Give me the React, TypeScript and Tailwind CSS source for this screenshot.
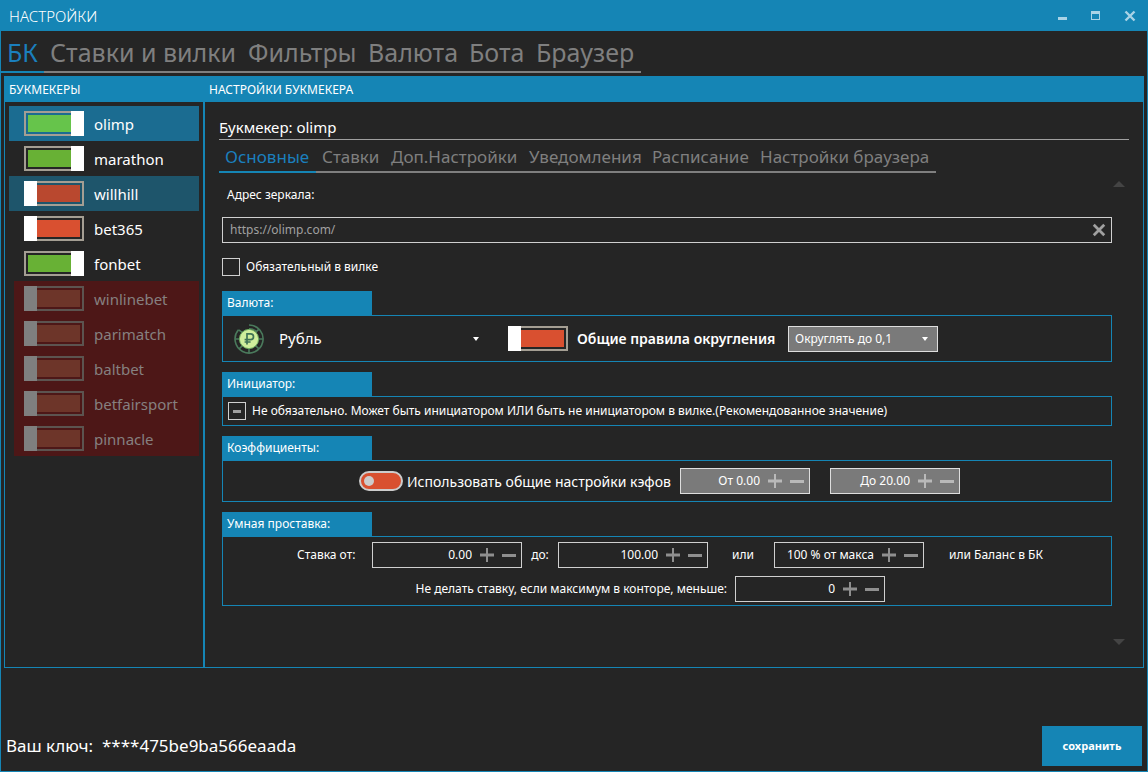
import { useState } from "react";
import type { ReactNode } from "react";
import clsx from "clsx";

interface Bookmaker {
  name: string;
  on: boolean;
  disabled?: boolean;
}

const BOOKMAKERS: Bookmaker[] = [
  { name: "olimp", on: true },
  { name: "marathon", on: true },
  { name: "willhill", on: false },
  { name: "bet365", on: false },
  { name: "fonbet", on: true },
  { name: "winlinebet", on: false, disabled: true },
  { name: "parimatch", on: false, disabled: true },
  { name: "baltbet", on: false, disabled: true },
  { name: "betfairsport", on: false, disabled: true },
  { name: "pinnacle", on: false, disabled: true },
];

const MAIN_TABS = [
  { label: "БК", width: "w-[43px]" },
  { label: "Ставки и вилки", width: "w-[198px]" },
  { label: "Фильтры", width: "w-[120px]" },
  { label: "Валюта", width: "w-[101px]" },
  { label: "Бота", width: "w-[67px]" },
  { label: "Браузер", width: "w-[111px]" },
];

const SUB_TABS = [
  { label: "Основные", width: "w-[97px]" },
  { label: "Ставки", width: "w-[69px]" },
  { label: "Доп.Настройки", width: "w-[138px]" },
  { label: "Уведомления", width: "w-[123px]" },
  { label: "Расписание", width: "w-[108px]" },
  { label: "Настройки браузера", width: "w-[182px]" },
];

const CloseIcon = ({ size }: { size: number }) => (
  <svg width={size} height={size} viewBox="0 0 12 12" aria-hidden="true">
    <path d="M1.5 1.5 10.5 10.5M10.5 1.5 1.5 10.5" stroke="currentColor" strokeWidth="2.4" />
  </svg>
);

const Caret = () => (
  <svg width="6" height="4" viewBox="0 0 6 4" aria-hidden="true">
    <path d="M0 0h6L3 4z" fill="currentColor" />
  </svg>
);

const RubleIcon = () => (
  <svg width="32" height="32" viewBox="0 0 32 32" fill="none" aria-hidden="true" className="shrink-0">
    <path d="M16 2a14 14 0 1 1-10.5 4.8" stroke="#4a7a5c" strokeWidth="1.6" />
    <path d="M16 5.5A10.5 10.5 0 0 1 24 9" stroke="#4a7a5c" strokeWidth="1.2" />
    <path
      d="M25.5 16H30M2 16h4.5M16 25.5V30M22.7 22.7l3.2 3.2M9.3 22.7l-3.2 3.2M22.7 9.3l3.2-3.2M9.3 9.3 5.5 6.8"
      stroke="#4a7a5c"
      strokeWidth="1.6"
    />
    <circle cx="16" cy="16" r="9.6" fill="#cfee9c" stroke="#6fae62" strokeWidth="1" />
    <path
      d="M14 21.5V10.8h3.6a2.9 2.9 0 0 1 0 5.8H11.6M11.6 19h6"
      stroke="#3f7355"
      strokeWidth="1.7"
    />
  </svg>
);

interface ToggleProps {
  label: string;
  on?: boolean;
  disabled?: boolean;
  fill?: string;
}

const Toggle = ({ label, on = false, disabled, fill }: ToggleProps) => {
  const [checked, setChecked] = useState(on);
  const color = fill || (checked ? "bg-[#68b135]" : "bg-[#d95030]");
  return (
    <label
      className={clsx(
        "relative block h-[25px] w-[60px] shrink-0 border-2 p-[2px]",
        disabled ? "border-[#5c5450]" : "border-[#a49e93]",
      )}
    >
      <input
        type="checkbox"
        role="switch"
        aria-label={label}
        checked={checked}
        disabled={disabled}
        onChange={() => setChecked(!checked)}
        className="sr-only"
      />
      <span className={clsx("block h-full w-full", color)} />
      <span
        className={clsx(
          "absolute -inset-y-[2px] w-[13px]",
          checked ? "-right-[2px]" : "-left-[2px]",
          disabled ? "bg-[#7f7f7f]" : "bg-white",
        )}
      />
    </label>
  );
};

interface NumberFieldProps {
  label: string;
  value: string;
  muted?: boolean;
}

const NumberField = ({ label, value, muted }: NumberFieldProps) => (
  <div
    className={clsx(
      "flex h-[26px] shrink-0 border pr-px",
      muted ? "w-[130px] border-[#dedede] bg-[#7a7a7a] text-[#b9b9b9]" : "w-[150px] border-[#d0d0d0] text-[#8f8f8f]",
    )}
  >
    <input
      type="text"
      aria-label={label}
      defaultValue={value}
      className="min-w-0 flex-1 bg-transparent pr-1 text-right text-xs text-white outline-none"
    />
    <button type="button" aria-label="Увеличить" className="flex w-[22px] items-center justify-center">
      <svg width="14" height="14" viewBox="0 0 14 14" aria-hidden="true">
        <path d="M0 5.5h14v3H0zM6 0h2v14H6z" fill="currentColor" />
      </svg>
    </button>
    <button type="button" aria-label="Уменьшить" className="flex w-[22px] items-center justify-center">
      <svg width="14" height="14" viewBox="0 0 14 14" aria-hidden="true">
        <path d="M0 6h14v3H0z" fill="currentColor" />
      </svg>
    </button>
  </div>
);

interface GroupProps {
  title: string;
  className: string;
  children: ReactNode;
}

const Group = ({ title, className, children }: GroupProps) => (
  <section className="mb-[10px]">
    <h3 className="h-6 w-[150px] bg-[#1585b5] pl-[5px] text-xs leading-6">{title}</h3>
    <div className={clsx("border border-[#1585b5]", className)}>{children}</div>
  </section>
);

const Sidebar = () => (
  <aside className="w-[199px] shrink-0 border-l border-[#1585b5]">
    <h2 className="h-[26px] bg-[#1585b5] pl-1 text-xs leading-7">БУКМЕКЕРЫ</h2>
    <ul className="mt-1 pr-1 pl-1">
      {BOOKMAKERS.map((b, i) => (
        <li
          key={b.name}
          className={clsx(
            "flex h-[35px] items-center gap-[10px]",
            b.disabled ? "ml-[5px] bg-[#4d1717] pl-[10px] text-[#868080]" : "pl-[15px]",
            i === 0 && "bg-[#1b6c91]",
            i === 2 && "bg-[#1e556b]",
          )}
        >
          <Toggle
            label={b.name}
            on={b.on}
            disabled={b.disabled}
            fill={
              b.disabled
                ? "bg-[#6d3529]"
                : i === 0
                  ? "bg-[#66c44b]"
                  : i === 2
                    ? "bg-[#b9482f]"
                    : undefined
            }
          />
          <span className="pt-px text-[15px]">{b.name}</span>
        </li>
      ))}
    </ul>
  </aside>
);

const MainSettings = () => (
  <div className="flex flex-1">
    <div className="min-w-0 flex-1 pl-[3px]">
      <label htmlFor="mirror" className="mt-[14px] block pl-[5px] text-xs leading-4">
        Адрес зеркала:
      </label>
      <div className="mt-[14px] flex h-[26px] items-center border border-[#d0d0d0] pr-[5px] pl-[7px]">
        <input
          id="mirror"
          type="text"
          defaultValue="https://olimp.com/"
          className="min-w-0 flex-1 bg-transparent text-xs text-[#a0a0a0] outline-none"
        />
        <button type="button" aria-label="Очистить" className="text-[#a0a0a0]">
          <CloseIcon size={14} />
        </button>
      </div>

      <label className="mt-[15px] mb-[15px] flex h-[18px] items-center gap-[6px] text-xs">
        <input type="checkbox" className="size-[18px] appearance-none border border-[#d0d0d0] checked:bg-[#8f8f8f]" />
        Обязательный в вилке
      </label>

      <Group title="Валюта:" className="flex h-[47px] items-center pl-[10px]">
        <RubleIcon />
        <div className="relative ml-[14px] flex w-[200px] items-center">
          <select aria-label="Валюта" className="w-full appearance-none bg-transparent text-[15px] outline-none">
            <option>Рубль</option>
          </select>
          <span className="pointer-events-none absolute right-0">
            <Caret />
          </span>
        </div>
        <div className="ml-[29px] flex w-[280px] shrink-0 items-center gap-[9px]">
          <Toggle label="Общие правила округления" />
          <span className="text-[14px] font-semibold whitespace-nowrap">Общие правила округления</span>
        </div>
        <div className="relative flex h-[26px] w-[150px] shrink-0 items-center border border-[#dedede] bg-[#7a7a7a]">
          <select aria-label="Округление" className="w-full appearance-none pl-[6px] text-xs outline-none">
            <option>Округлять до 0,1</option>
          </select>
          <span className="pointer-events-none absolute right-[9px]">
            <Caret />
          </span>
        </div>
      </Group>

      <Group title="Инициатор:" className="flex h-[30px] items-center pl-[5px]">
        <label className="flex items-center gap-[6px] text-xs">
          <input
            type="checkbox"
            className="flex size-[18px] shrink-0 appearance-none items-center justify-center border border-[#d0d0d0] before:h-[3px] before:w-2 before:bg-[#a0a0a0]"
          />
          Не обязательно. Может быть инициатором ИЛИ быть не инициатором в вилке.(Рекомендованное значение)
        </label>
      </Group>

      <Group title="Коэффициенты:" className="flex h-[42px] items-center justify-center pr-[15px]">
        <label className="mr-[5px] flex w-[316px] items-center gap-1 text-[14px] whitespace-nowrap">
          <input
            type="checkbox"
            role="switch"
            className="flex h-5 w-11 shrink-0 appearance-none items-center rounded-full border-2 border-[#cccccc] bg-[#d95030] pl-[3px] before:size-[10px] before:rounded-full before:bg-[#cccccc]"
          />
          Использовать общие настройки кэфов
        </label>
        <div className="flex gap-5">
          <NumberField label="Коэффициент от" value="От 0.00" muted />
          <NumberField label="Коэффициент до" value="До 20.00" muted />
        </div>
      </Group>

      <Group title="Умная проставка:" className="flex h-[70px] flex-col gap-2 pt-[5px] text-xs">
        <div className="flex items-center justify-center">
          <span className="w-[75px]">Ставка от:</span>
          <NumberField label="Ставка от" value="0.00" />
          <span className="w-9 text-center">до:</span>
          <NumberField label="Ставка до" value="100.00" />
          <span className="w-[66px] pl-1 text-center">или</span>
          <NumberField label="Процент от макса" value="100 % от макса" />
          <span className="w-[113px] pl-[25px] whitespace-nowrap">или Баланс в БК</span>
        </div>
        <div className="flex items-center justify-end gap-2 pr-[226px]">
          <span>Не делать ставку, если максимум в конторе, меньше:</span>
          <NumberField label="Минимальный максимум" value="0" />
        </div>
      </Group>
    </div>

    {/* Scroll arrows */}
    <div className="flex w-[17px] shrink-0 flex-col items-end justify-between pt-2 pr-1 pb-[22px] text-[#444444]">
      <svg width="12" height="6" viewBox="0 0 12 6" aria-hidden="true">
        <path d="M0 6 6 0l6 6z" fill="currentColor" />
      </svg>
      <svg width="12" height="6" viewBox="0 0 12 6" aria-hidden="true">
        <path d="M0 0h12L6 6z" fill="currentColor" />
      </svg>
    </div>
  </div>
);

const App = () => {
  const [tab, setTab] = useState(0);
  const [subTab, setSubTab] = useState(0);

  return (
    <div className="flex min-h-screen flex-col border border-t-0 border-[#1585b5] bg-[#252525] font-['Noto_Sans','Open_Sans',sans-serif] text-white">
      {/* Title bar */}
      <header className="flex h-[31px] items-center justify-between bg-[#1585b5] pr-[11px] pl-2">
        <h1 className="pt-px text-[15px] font-light">НАСТРОЙКИ</h1>
        <div className="flex items-center gap-6 text-[#a9d3e6]">
          <button type="button" aria-label="Свернуть">
            <svg width="9" height="9" viewBox="0 0 9 9" aria-hidden="true">
              <path d="M0 6h9v3H0z" fill="currentColor" />
            </svg>
          </button>
          <button type="button" aria-label="Развернуть">
            <svg width="9" height="9" viewBox="0 0 9 9" aria-hidden="true">
              <path d="M0 0h9v9H0zM1 3v5h7V3z" fill="currentColor" fillRule="evenodd" />
            </svg>
          </button>
          <button type="button" aria-label="Закрыть">
            <CloseIcon size={12} />
          </button>
        </div>
      </header>

      <nav className="flex h-[42px]">
        {MAIN_TABS.map((t, i) => (
          <button
            key={t.label}
            type="button"
            onClick={() => setTab(i)}
            className={clsx(
              "border-b-2 pt-[2px] pl-[6px] text-left text-[25px] leading-9 whitespace-nowrap",
              t.width,
              i === tab ? "border-[#1585b5] text-[#1b7fbd]" : "border-[#7f7f7f] text-[#7f7f7f]",
            )}
          >
            {t.label}
          </button>
        ))}
      </nav>

      <main className="mx-[3px] mt-[3px] flex flex-1 border-b border-[#1585b5]">
        <Sidebar />
        <section className="flex min-w-0 flex-1 flex-col border-r border-l-2 border-[#1585b5]">
          <h2 className="h-[26px] bg-[#1585b5] pl-1 text-xs leading-7">НАСТРОЙКИ БУКМЕКЕРА</h2>
          <div className="flex flex-1 flex-col pr-[14px] pl-[14px]">
            <p className="h-[38px] border-b border-[#a0a0a0] pt-[14px] text-[15px] leading-[22px]">Букмекер: olimp</p>
            <nav className="flex h-[33px]">
              {SUB_TABS.map((t, i) => (
                <button
                  key={t.label}
                  type="button"
                  onClick={() => setSubTab(i)}
                  className={clsx(
                    "border-b-2 pt-[3px] pl-[6px] text-left text-[17px] whitespace-nowrap",
                    t.width,
                    i === subTab ? "border-[#1585b5] text-[#1b7fbd]" : "border-[#7f7f7f] text-[#7f7f7f]",
                  )}
                >
                  {t.label}
                </button>
              ))}
            </nav>
            <MainSettings />
          </div>
        </section>
      </main>

      <footer className="flex items-center justify-between pt-[58px] pr-[5px] pb-[5px] pl-[5px]">
        <p className="text-[17px] whitespace-pre">Ваш ключ:  ****475be9ba566eaada</p>
        <button type="button" className="h-10 w-[100px] bg-[#1585b5] text-[11px] font-bold">
          сохранить
        </button>
      </footer>
    </div>
  );
};

export default App;
